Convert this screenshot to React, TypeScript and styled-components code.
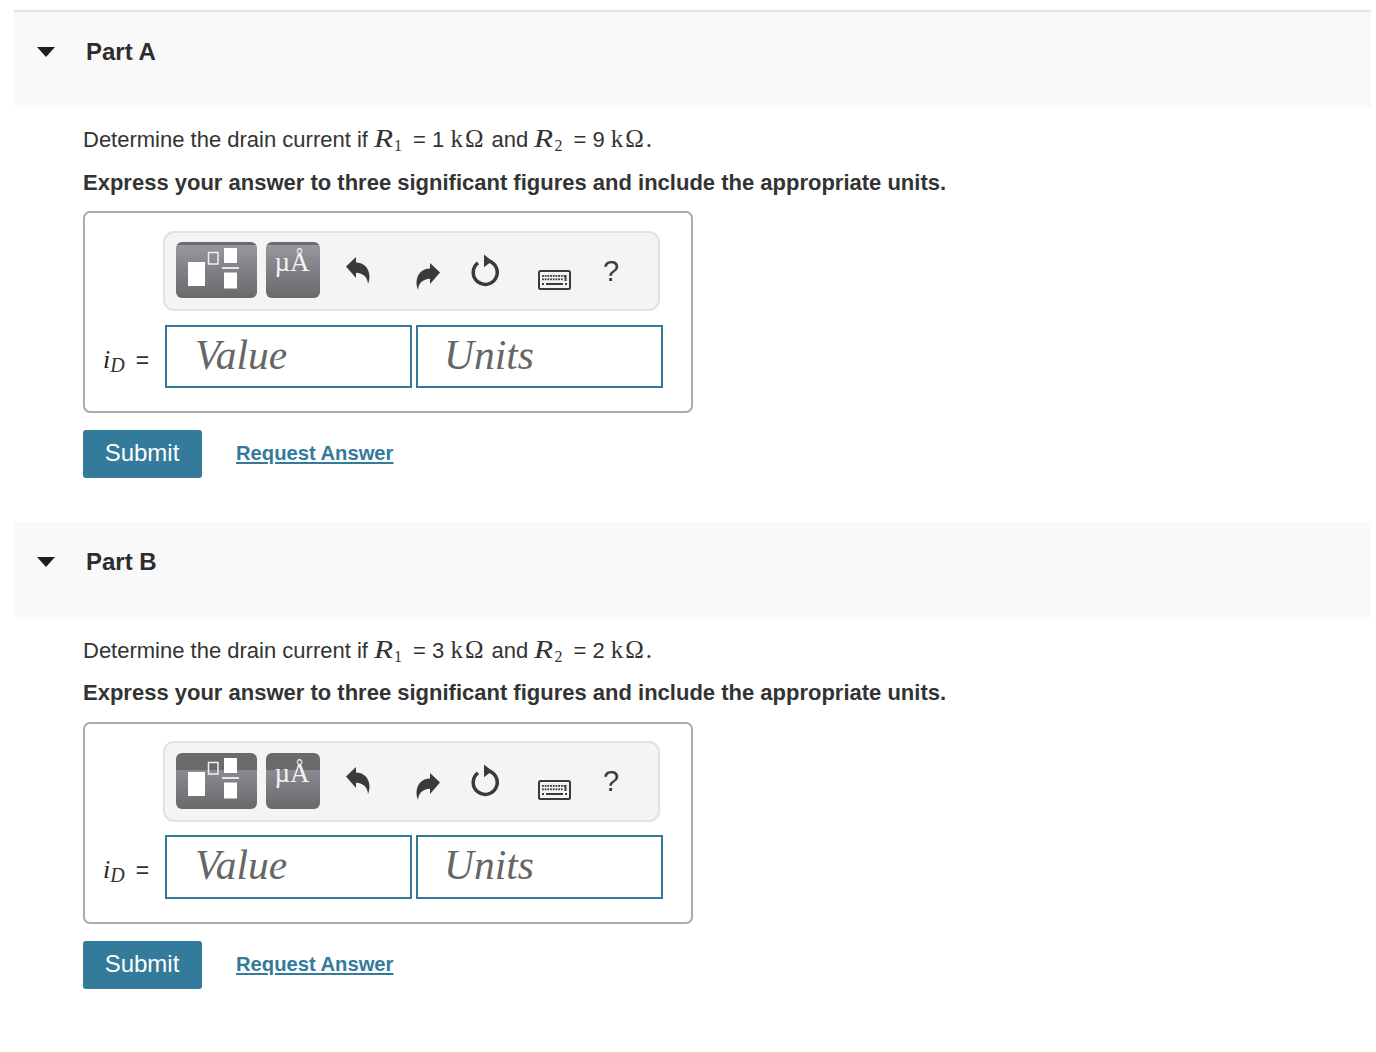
import React from "react";
import styled, { createGlobalStyle } from "styled-components";

const Global = createGlobalStyle`
  html, body { margin: 0; padding: 0; background: #fff; }
  body { font-family: "Liberation Sans", Arial, sans-serif; color: #333; }
`;

const Page = styled.div`
  width: 1376px;
  height: 1052px;
  box-sizing: border-box;
  padding: 10px 5px 0 14px;
  overflow: hidden;
`;

const Section = styled.section<{ $first?: boolean }>`
  border-top: ${(p) => (p.$first ? "2px solid #e2e2e2" : "none")};
  margin-top: ${(p) => (p.$first ? "0" : "44px")};
`;

const Header = styled.header`
  height: 95px;
  background: #f9f9f9;
  display: flex;
  align-items: flex-start;
  padding: 26px 0 0 23px;
  box-sizing: border-box;
`;

const Caret = styled.span`
  width: 0;
  height: 0;
  margin-top: 9px;
  border-left: 9px solid transparent;
  border-right: 9px solid transparent;
  border-top: 10px solid #1f1f1f;
`;

const Title = styled.h2`
  margin: 0 0 0 31px;
  font-size: 24px;
  line-height: 27px;
  font-weight: 700;
  color: #2d2d2d;
`;

const Body = styled.div<{ $top: number }>`
  padding: ${(p) => p.$top}px 0 0 69px;
`;

const Question = styled.p`
  margin: 0;
  font-size: 22px;
  line-height: 27px;
  color: #333;
  white-space: nowrap;
`;

const Unit = styled.span`
  font-family: "Liberation Serif", "Times New Roman", serif;
  font-size: 25px;
  letter-spacing: 2px;
`;

const RVar = styled.i`
  display: inline-block;
  width: 20px;
  font-family: "Liberation Serif", "Times New Roman", serif;
  font-size: 25px;
  line-height: 20px;
  color: #333;
  transform: scaleX(1.25);
  transform-origin: left center;
`;

const Sub = styled.sub`
  font-family: "Liberation Serif", "Times New Roman", serif;
  font-size: 16px;
  line-height: 0;
  vertical-align: -4px;
  margin-right: 11px;
`;

const Instruction = styled.p<{ $mt: number }>`
  margin: ${(p) => p.$mt}px 0 0;
  font-size: 22px;
  line-height: 27px;
  font-weight: 700;
  color: #333;
  white-space: nowrap;
`;

const AnswerBox = styled.div<{ $top: number; $mt: number }>`
  margin-top: ${(p) => p.$mt}px;
  width: 610px;
  height: 202px;
  box-sizing: border-box;
  border: 2px solid #aaa;
  border-radius: 7px;
  padding: ${(p) => p.$top}px 0 0 78px;
`;

const Toolbar = styled.div<{ $h: number }>`
  width: 497px;
  height: ${(p) => p.$h}px;
  box-sizing: border-box;
  border: 2px solid #e2e2e2;
  border-radius: 11px;
  background: #f4f4f4;
  display: flex;
  align-items: flex-start;
  padding: 9px 0 0 11px;
`;

const Palette = styled.div<{ $band: number; $w: number; $ml?: number; $mt: number }>`
  width: ${(p) => p.$w}px;
  height: 56px;
  flex: none;
  margin-left: ${(p) => p.$ml ?? 0}px;
  margin-top: ${(p) => p.$mt}px;
  border-radius: 6px;
  background:
    linear-gradient(#6a696b, #6a696b) top / 100% ${(p) => p.$band}px no-repeat,
    linear-gradient(#9b99a2, #69686a);
  display: flex;
  justify-content: center;
  overflow: hidden;
`;

const PaletteGlyph = styled.svg<{ $shift: number }>`
  width: 81px;
  height: 55px;
  margin-top: ${(p) => p.$shift}px;
  display: block;
`;

const Micro = styled.span`
  font-family: "Liberation Serif", "Times New Roman", serif;
  color: #f4f4f4;
  font-size: 27px;
  line-height: 36px;
  margin-top: 2px;
  padding-right: 2px;
  white-space: nowrap;
`;

const Tool = styled.svg<{ $l: number; $t: number; $w: number; $h: number }>`
  flex: none;
  width: ${(p) => p.$w}px;
  height: ${(p) => p.$h}px;
  margin-left: ${(p) => p.$l}px;
  margin-top: ${(p) => p.$t}px;
  color: #3a3a3a;
`;

const Help = styled.span`
  flex: none;
  width: 16px;
  margin-left: 32px;
  margin-top: 12px;
  font-size: 29px;
  line-height: 34px;
  color: #3a3a3a;
`;

const Row = styled.div<{ $mt: number }>`
  display: flex;
  align-items: center;
  margin-top: ${(p) => p.$mt}px;
  margin-left: -60px;
`;

const Label = styled.span`
  width: 62px;
  flex: none;
  display: flex;
  align-items: baseline;
  font-size: 23px;
  color: #333;
  white-space: nowrap;
  padding-top: 6px;
`;

const LabelVar = styled.i`
  font-family: "Liberation Serif", "Times New Roman", serif;
  font-size: 26px;
  color: #222;
`;

const LabelSub = styled.span`
  font-size: 20px;
  font-style: italic;
  font-family: "Liberation Serif", serif;
  transform: translateY(4px);
  margin-right: 11px;
`;

const Field = styled.div<{ $h: number; $ml?: number; $pad: number }>`
  width: 247px;
  height: ${(p) => p.$h}px;
  margin-left: ${(p) => p.$ml ?? 0}px;
  box-sizing: border-box;
  border: 2px solid #31789b;
  padding-left: ${(p) => p.$pad}px;
  font-family: "Liberation Serif", "Times New Roman", serif;
  font-style: italic;
  font-size: 41.5px;
  line-height: 57px;
  color: #666;
  background: #fff;
`;

const Actions = styled.div<{ $mt: number }>`
  display: flex;
  align-items: center;
  margin-top: ${(p) => p.$mt}px;
`;

const Submit = styled.button`
  width: 119px;
  height: 48px;
  border: none;
  border-radius: 3px;
  background: #337a9b;
  color: #fff;
  font-family: "Liberation Sans", Arial, sans-serif;
  font-size: 24px;
  padding: 0 1px 3px 0;
`;

const Link = styled.a`
  margin-left: 34px;
  padding-bottom: 2px;
  font-size: 20.2px;
  font-weight: 700;
  color: #337a9b;
  text-decoration: underline;
  white-space: nowrap;
`;

const KeyDots = () => (
  <g fill="currentColor">
    {[0, 1, 2, 3, 4, 5, 6, 7, 8].map((i) => (
      <rect key={`a${i}`} x={4 + i * 2.7} y={5} width={1.8} height={1.8} />
    ))}
    {[0, 1, 2, 3, 4, 5, 6, 7].map((i) => (
      <rect key={`b${i}`} x={4 + i * 2.7} y={8.4} width={1.8} height={1.8} />
    ))}
    <rect x={26.5} y={5} width={2} height={6} />
    <rect x={4} y={13} width={2} height={2} />
    <rect x={8} y={13} width={17} height={2} />
    <rect x={27} y={13} width={2} height={2} />
  </g>
);

type PartProps = {
  name: string;
  r1: string;
  r2: string;
  toolH: number;
  band: number;
  fieldH: number;
  rowMt: number;
  boxMt: number;
  boxTop: number;
  bodyTop: number;
  instructionMt: number;
  paletteMt: number;
  glyphShift: number;
};

const Part = ({ name, r1, r2, toolH, band, fieldH, rowMt, boxMt, boxTop, bodyTop, instructionMt, paletteMt, glyphShift }: PartProps) => (
  <Section $first={name === "Part A"}>
    <Header>
      <Caret />
      <Title>{name}</Title>
    </Header>
    <Body $top={bodyTop}>
      <Question>
        Determine the drain current if <RVar>R</RVar>
        <Sub>1</Sub>= {r1} <Unit>kΩ</Unit> and <RVar>R</RVar>
        <Sub>2</Sub>= {r2} <Unit>kΩ.</Unit>
      </Question>
      <Instruction $mt={instructionMt}>Express your answer to three significant figures and include the appropriate units.</Instruction>
      <AnswerBox $top={boxTop} $mt={boxMt}>
        <Toolbar $h={toolH}>
          <Palette $band={band} $w={81} $mt={paletteMt}>
            <PaletteGlyph $shift={glyphShift} viewBox="0 0 81 55">
              <rect x="12" y="20" width="17" height="24" fill="#fff" />
              <rect x="32.500" y="10.500" width="9.500" height="11.500" fill="none" stroke="#f0f0f0" strokeWidth="1.500" />
              <rect x="48" y="6" width="13" height="15" fill="#fff" />
              <rect x="46" y="25" width="17" height="2" fill="#e8e8e8" />
              <rect x="48" y="30.500" width="13" height="16" fill="#fff" />
            </PaletteGlyph>
          </Palette>
          <Palette $band={band} $w={54} $ml={9} $mt={paletteMt}>
            <Micro>µÅ</Micro>
          </Palette>
          <Tool $l={26} $t={15} $w={24} $h={27} viewBox="0 0 24 27">
            <path fill="currentColor" d="M0 9.500 10 0v5.500c8 .3 13 5.500 13.500 13.500.1 2.600-.5 5.500-1.500 8-.5-6.500-4.500-11-12-11.200V21z" />
          </Tool>
          <Tool $l={46} $t={21} $w={24} $h={27} viewBox="0 0 24 27">
            <path fill="currentColor" d="M24 9.500 14 0v5.500C6 5.800 1 11 .5 19c-.1 2.600.5 5.500 1.500 8 .5-6.500 4.500-11 12-11.200V21z" />
          </Tool>
          <Tool $l={31} $t={12} $w={28} $h={33} viewBox="0 0 28 33">
            <path fill="none" stroke="currentColor" strokeWidth="3.500" d="M7 8.800A12 12 0 1 0 17 6.700" />
            <path fill="currentColor" d="M13 0.500l8 6.500-8 6.200z" />
          </Tool>
          <Tool $l={39} $t={28} $w={33} $h={20} viewBox="0 0 33 20">
            <rect x="1" y="1" width="31" height="18" rx="1.500" fill="#f4f4f4" stroke="currentColor" strokeWidth="2" />
            <KeyDots />
          </Tool>
          <Help>?</Help>
        </Toolbar>
        <Row $mt={rowMt}>
          <Label>
            <LabelVar>i</LabelVar>
            <LabelSub>D</LabelSub>=
          </Label>
          <Field $h={fieldH} $pad={28}>Value</Field>
          <Field $h={fieldH} $ml={4} $pad={26}>Units</Field>
        </Row>
      </AnswerBox>
      <Actions $mt={17}>
        <Submit>Submit</Submit>
        <Link>Request Answer</Link>
      </Actions>
    </Body>
  </Section>
);

export default function App() {
  return (
    <Page>
      <Global />
      <Part name="Part A" r1="1" r2="9" toolH={80} band={3} fieldH={63} rowMt={14} boxMt={15} boxTop={18} bodyTop={18} instructionMt={16} paletteMt={0} glyphShift={0} />
      <Part name="Part B" r1="3" r2="2" toolH={81} band={17} fieldH={64} rowMt={13} boxMt={16} boxTop={17} bodyTop={19} instructionMt={15} paletteMt={1} glyphShift={-1} />
    </Page>
  );
}
